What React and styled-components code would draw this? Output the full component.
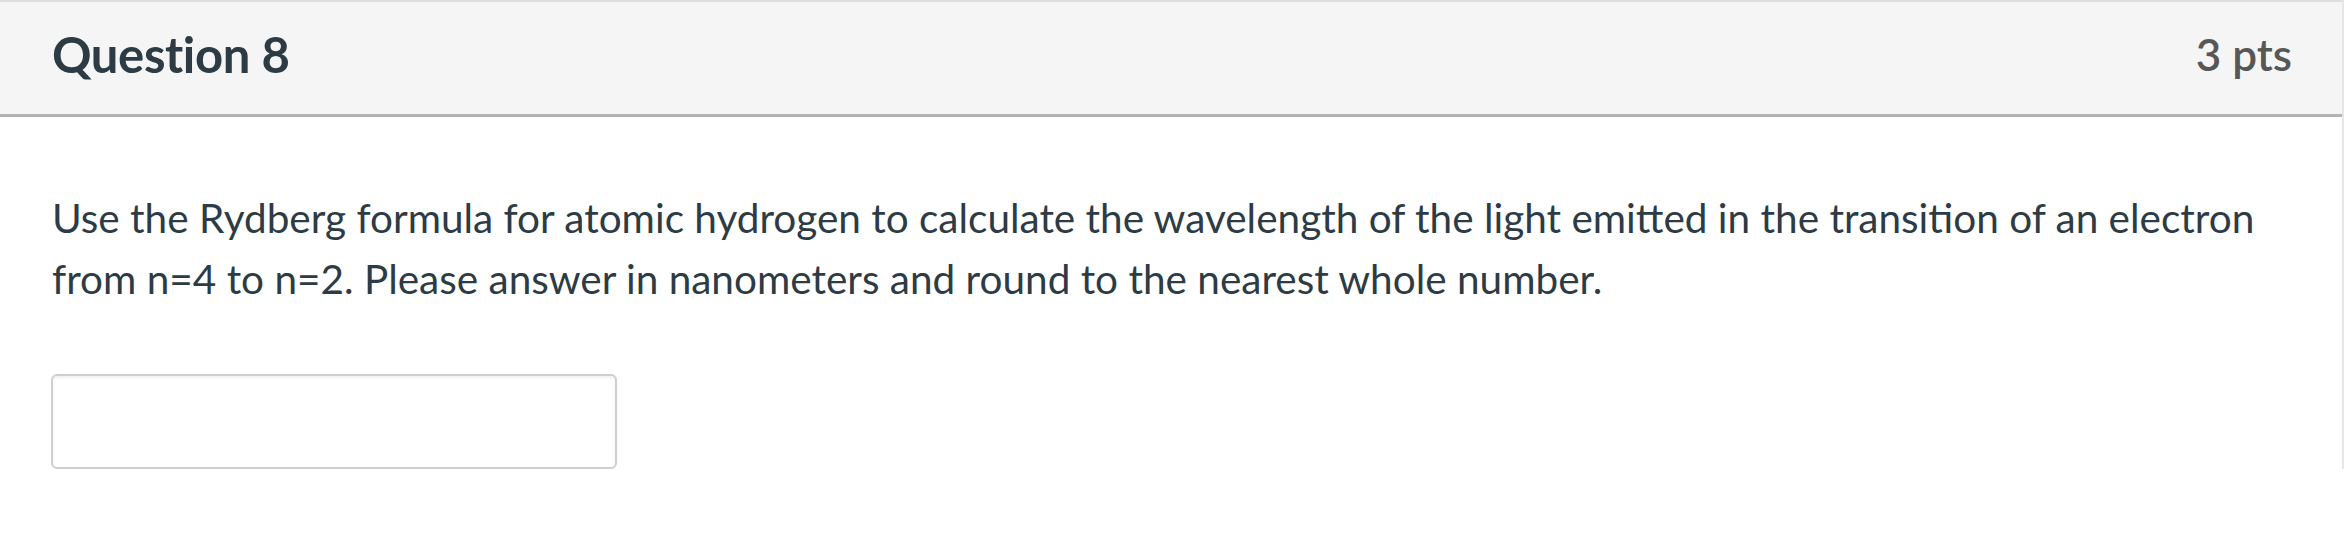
import React from 'react'
import styled, { createGlobalStyle } from 'styled-components'

const GlobalStyle = createGlobalStyle`
  html, body {
    margin: 0;
    padding: 0;
    background: #ffffff;
  }
  body {
    font-family: Lato, "Open Sans", "Liberation Sans", sans-serif;
    color: #2d3b45;
  }
`

const Question = styled.div`
  width: 100%;
  background: #ffffff;
  border-right: 2px solid #e6e6e6;
  box-sizing: border-box;
`

const Header = styled.div`
  display: flex;
  align-items: center;
  justify-content: space-between;
  height: 117px;
  box-sizing: border-box;
  padding: 0 50px 8px 52px;
  background: #f5f5f5;
  border-top: 2px solid #dedede;
  border-bottom: 3px solid #b3b3b3;
`

const Title = styled.h2`
  margin: 0;
  font-size: 49px;
  font-weight: 700;
  letter-spacing: -0.4px;
  color: #2d3b45;
`

const Points = styled.div`
  font-size: 44px;
  font-weight: 600;
  color: #575757;
`

const Body = styled.div`
  padding: 70px 52px 0 52px;
`

const Text = styled.p`
  margin: 0;
  font-size: 40.5px;
  line-height: 61px;
  color: #2d3b45;
`

const AnswerInput = styled.input`
  display: block;
  margin: 65px 0 0 -1px;
  width: 566px;
  height: 95px;
  box-sizing: border-box;
  border: 2px solid #cfcfcf;
  border-radius: 6px;
  background: #fff;
  box-shadow: inset 0 2px 3px rgba(0, 0, 0, 0.06);
  padding: 0 16px;
  font-family: inherit;
  font-size: 37px;
  color: #2d3b45;
  outline: none;
`

export default function App() {
  return (
    <>
      <GlobalStyle />
      <Question>
        <Header>
          <Title>Question 8</Title>
          <Points>3 pts</Points>
        </Header>
        <Body>
          <Text>
            Use the Rydberg formula for atomic hydrogen to calculate the wavelength of the light emitted in the transition of an electron from n=4 to n=2. Please answer in nanometers and round to the nearest whole number.
          </Text>
          <AnswerInput type="text" aria-label="Answer" />
        </Body>
      </Question>
    </>
  )
}
